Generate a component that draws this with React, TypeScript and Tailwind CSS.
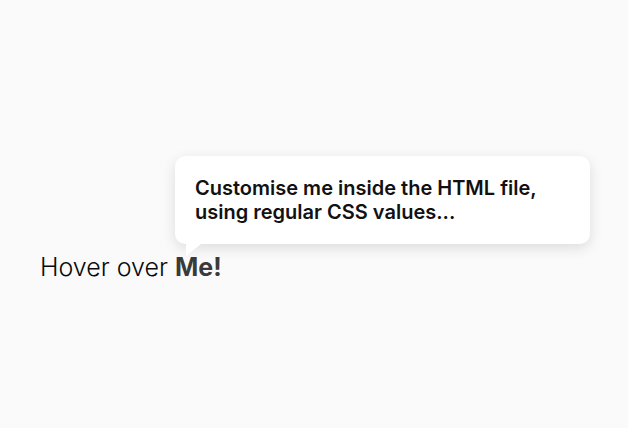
export default function App() {
  return (
    <div
      className="min-h-screen w-full bg-[#fafafa] pt-[251px] pl-10"
      style={{ fontFamily: "Inter, 'Noto Sans', sans-serif" }}
    >
      <p className="text-[25px] font-light leading-8 text-[#0a0a0a]">
        Hover over{" "}
        <span className="relative inline-block font-bold text-[#3a3a3a]">
          Me!
          <span className="absolute left-0 bottom-[calc(100%+7px)] w-[415px] rounded-[10px] bg-white px-5 py-5 text-[20px] font-semibold leading-6 text-[#111] shadow-[0_4px_14px_rgba(0,0,0,0.12)]">
            Customise me inside the HTML file,
            <br />
            using regular CSS values...
            <span className="absolute left-[11px] top-full h-0 w-0 border-t-[12px] border-r-[15px] border-t-white border-r-transparent" />
          </span>
        </span>
      </p>
    </div>
  );
}
